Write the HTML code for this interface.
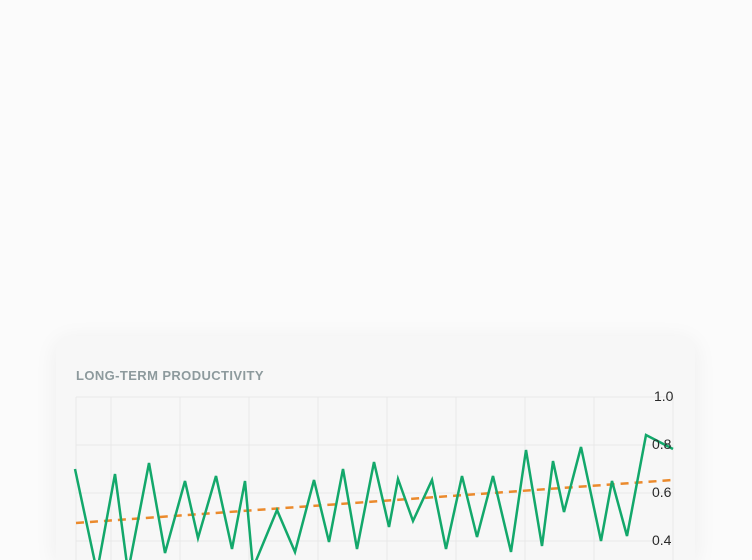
<!DOCTYPE html>
<html><head><meta charset="utf-8"><style>
html,body{margin:0;padding:0;width:752px;height:560px;overflow:hidden;background:#fbfbfb;font-family:"Liberation Sans",sans-serif}
.card{position:absolute;left:56px;top:336px;width:639px;height:224px;background:#f7f7f7;border-radius:13px 13px 0 0;box-shadow:0 4px 24px rgba(0,0,0,0.06)}
.title{position:absolute;left:76px;top:368px;font-size:13px;font-weight:bold;color:#8d9a9d;letter-spacing:0.4px}
svg{position:absolute;left:0;top:0}
.lbl{position:absolute;font-size:14px;color:#2a2a2a}
</style></head><body>
<div class="card"></div>
<div class="title">LONG-TERM PRODUCTIVITY</div>
<svg width="752" height="560">
<g stroke="#e9e9e9" stroke-width="1">
<line x1="76" y1="397" x2="673" y2="397"/><line x1="76" y1="445" x2="673" y2="445"/><line x1="76" y1="493" x2="673" y2="493"/><line x1="76" y1="541" x2="673" y2="541"/>
<line x1="76" y1="397" x2="76" y2="560"/><line x1="111" y1="397" x2="111" y2="560"/><line x1="180" y1="397" x2="180" y2="560"/><line x1="249" y1="397" x2="249" y2="560"/><line x1="318" y1="397" x2="318" y2="560"/><line x1="387" y1="397" x2="387" y2="560"/><line x1="456" y1="397" x2="456" y2="560"/><line x1="525" y1="397" x2="525" y2="560"/><line x1="594" y1="397" x2="594" y2="560"/><line x1="673" y1="397" x2="673" y2="560"/>
</g>
<line x1="76" y1="523" x2="673" y2="480" stroke="#eb8a2c" stroke-width="2.5" stroke-dasharray="8 6"/>
<polyline fill="none" stroke="#13a86b" stroke-width="2.5" stroke-linejoin="miter" points="75,469 97,572 115,474 128,572 149,463 165,553 185,481 198,538 216,476 232,549 245,481 253,568 277,510 295,552 314,480 329,542 343,469 357,549 374,462 389,527 398,479 413,521 432,480 446,549 462,476 477,537 493,476 511,552 526,450 542,546 553,461 564,512 581,447 601,541 612,481 627,536 646,435 673,449"/>
</svg>
<div class="lbl" style="left:654px;top:388px">1.0</div>
<div class="lbl" style="left:652px;top:436px">0.8</div>
<div class="lbl" style="left:652px;top:484px">0.6</div>
<div class="lbl" style="left:652px;top:532px">0.4</div>
</body></html>
